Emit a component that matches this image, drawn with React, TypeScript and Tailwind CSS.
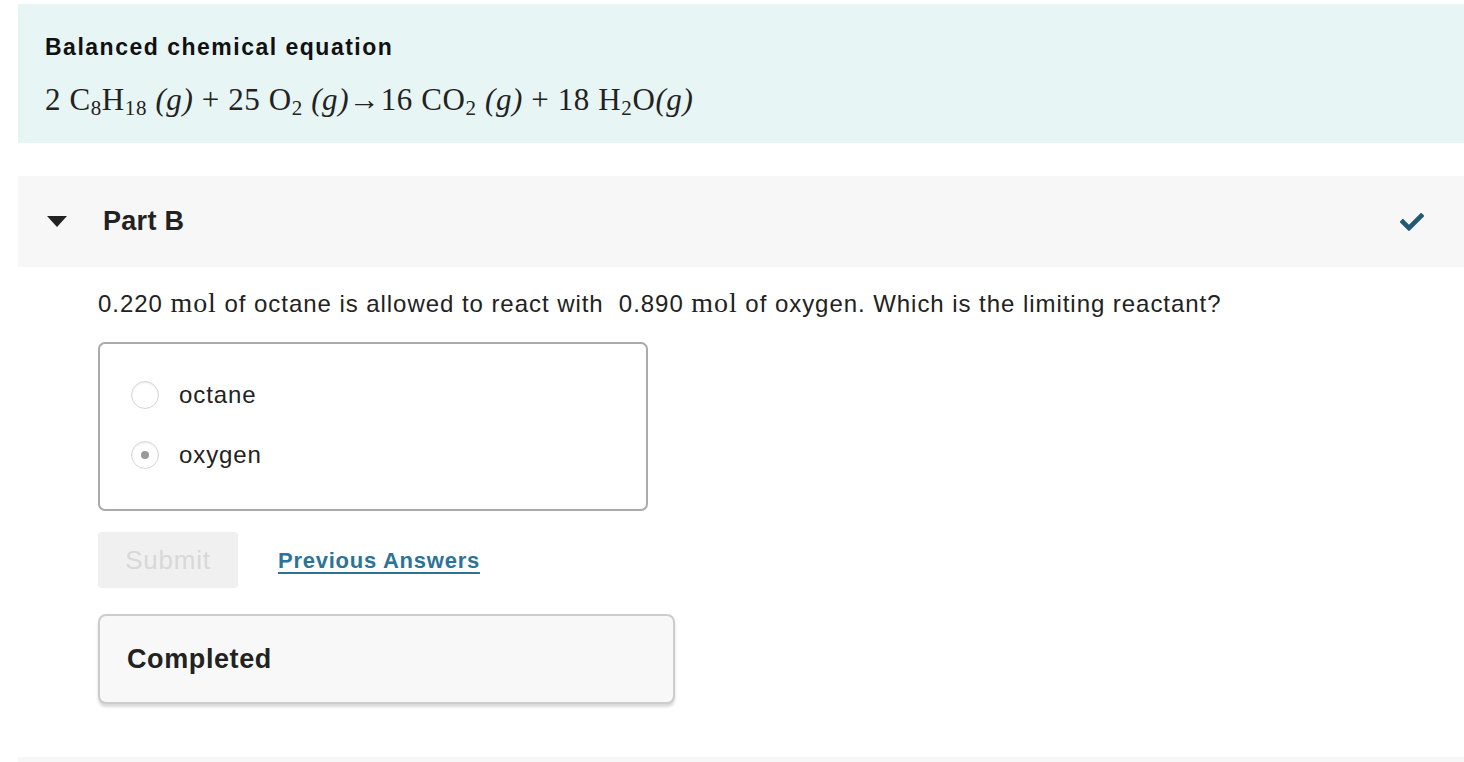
import { FaCheck } from 'react-icons/fa';

const sans = { fontFamily: '"Liberation Sans", Arial, sans-serif' };
const serif = { fontFamily: '"Liberation Serif", "Times New Roman", serif' };

function Equation() {
  return (
    <div className="text-[31px] text-[#222] leading-none tracking-[0.6px]" style={serif}>
      2 C<sub className="text-[21px]">8</sub>H<sub className="text-[21px]">18</sub> <i>(g)</i> + 25 O
      <sub className="text-[21px]">2</sub> <i>(g)</i>→16 CO<sub className="text-[21px]">2</sub> <i>(g)</i> + 18 H
      <sub className="text-[21px]">2</sub>O<i>(g)</i>
    </div>
  );
}

function Radio({ label, checked }: { label: string; checked?: boolean }) {
  return (
    <div className="flex items-center gap-[20px] h-[30px]">
      <span className="w-[28px] h-[28px] rounded-full border border-[#d6d6d6] bg-white flex items-center justify-center shadow-[inset_0_1px_2px_rgba(0,0,0,0.08)]">
        {checked && <span className="w-[8px] h-[8px] rounded-full bg-[#999]" />}
      </span>
      <span className="text-[24px] tracking-[0.9px] text-[#222]">{label}</span>
    </div>
  );
}

export default function App() {
  return (
    <div className="min-h-screen bg-white pt-[4px] pl-[18px]" style={sans}>
      {/* Equation box */}
      <div className="bg-[#e7f5f5] h-[139px] pl-[27px] pt-[32px]">
        <h2 className="text-[23px] tracking-[1.5px] font-bold text-[#111] leading-none mb-[25px]">Balanced chemical equation</h2>
        <Equation />
      </div>

      {/* Part B header */}
      <div className="mt-[33px] bg-[#f7f7f7] h-[91px] flex items-center pl-[29px] pr-[40px]">
        <svg width="20" height="11" viewBox="0 0 20 11" className="mr-[36px]">
          <path d="M0 0 L20 0 L10 11 Z" fill="#222" />
        </svg>
        <span className="text-[27px] tracking-[0.3px] font-bold text-[#222]">Part B</span>
        <FaCheck className="ml-auto text-[#235a72] w-[24px] h-[24px]" />
      </div>

      <div className="pl-[80px]">
        <p className="mt-[20px] text-[24px] tracking-[0.95px] text-[#222] leading-[32px]">
          0.220 <span className="text-[28px]" style={serif}>mol</span> of octane is allowed to react with&nbsp; 0.890{' '}
          <span className="text-[28px]" style={serif}>mol</span> of oxygen. Which is the limiting reactant?
        </p>

        <div className="mt-[22px] w-[550px] h-[169px] border-2 border-[#aaa] rounded-[7px] pl-[31px] pt-[36px] flex flex-col gap-[30px]">
          <Radio label="octane" />
          <Radio label="oxygen" checked />
        </div>

        <div className="mt-[21px] flex items-center gap-[40px]">
          <button className="w-[140px] h-[56px] bg-[#f0f0f0] rounded-[3px] text-[26px] tracking-[0.8px] text-[#d8d8d8]">Submit</button>
          <a className="text-[22px] tracking-[0.75px] font-bold text-[#2b7497] underline underline-offset-[4px] decoration-2">Previous Answers</a>
        </div>

        <div className="mt-[26px] w-[577px] h-[90px] bg-[#f8f8f8] border-2 border-[#ccc] rounded-[8px] shadow-[0_3px_3px_rgba(0,0,0,0.15)] flex items-center pl-[27px]">
          <span className="text-[27px] tracking-[0.6px] font-bold text-[#222]">Completed</span>
        </div>
      </div>

      <div className="mt-[53px] h-[6px] bg-[#f7f7f7]" />
    </div>
  );
}
